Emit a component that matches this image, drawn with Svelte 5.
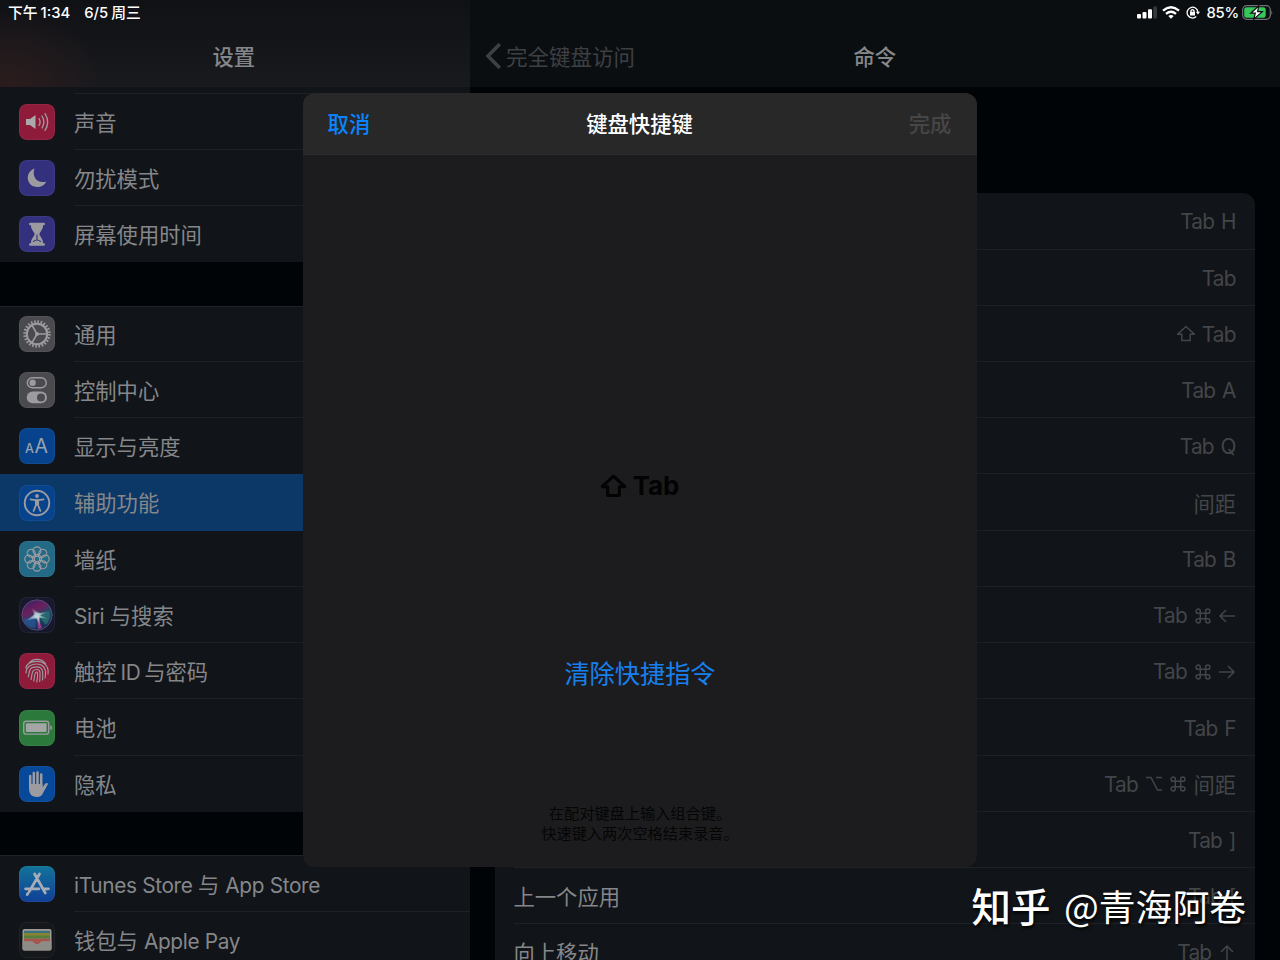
<script>
    const groups = [
        [
            { icon: 'sound', color: '#8f1b3b', label: '声音' },
            { icon: 'moon', color: '#33307d', label: '勿扰模式' },
            { icon: 'hourglass', color: '#33307d', label: '屏幕使用时间' }
        ],
        [
            { icon: 'gear', color: '#4b4b4f', label: '通用' },
            { icon: 'control', color: '#4b4b4f', label: '控制中心' },
            { icon: 'display', color: '#06438c', label: '显示与亮度' },
            { icon: 'access', color: '#06438c', label: '辅助功能', active: true },
            { icon: 'wallpaper', color: '#236a86', label: '墙纸' },
            { icon: 'siri', color: '#17182c', label: 'Siri 与搜索' },
            { icon: 'touch', color: '#8f1b3b', label: '触控\u2009ID\u2009与密码' },
            { icon: 'battery', color: '#2b7a3c', label: '电池' },
            { icon: 'hand', color: '#06489a', label: '隐私' }
        ],
        [
            { icon: 'appstore', color: 'linear-gradient(#12749a, #103f96)', label: 'iTunes Store 与 App Store' },
            { icon: 'wallet', color: '#15171a', label: '钱包与 Apple Pay' }
        ]
    ]

    const commands = [
        { keys: ['Tab', 'H'] },
        { keys: ['Tab'] },
        { keys: ['shift', 'Tab'] },
        { keys: ['Tab', 'A'] },
        { keys: ['Tab', 'Q'] },
        { keys: ['间距'] },
        { keys: ['Tab', 'B'] },
        { keys: ['Tab', 'cmd', 'left'] },
        { keys: ['Tab', 'cmd', 'right'] },
        { keys: ['Tab', 'F'] },
        { keys: ['Tab', 'option', 'cmd', '间距'] },
        { keys: ['Tab', ']'] },
        { label: '上一个应用', keys: ['Tab', '['] },
        { label: '向上移动', keys: ['Tab', 'up'] }
    ]

    const glyphs = {
        shift: 'M9 1.5 L17.3 9.2 H13.2 V15.5 H4.8 V9.2 H.7 Z',
        cmd: 'M6.3 6.3 H11.7 V11.7 H6.3 Z M6.3 6.3 H4.2 A2.1 2.1 0 1 1 6.3 4.2 Z M11.7 6.3 V4.2 A2.1 2.1 0 1 1 13.8 6.3 Z M11.7 11.7 H13.8 A2.1 2.1 0 1 1 11.7 13.8 Z M6.3 11.7 V13.8 A2.1 2.1 0 1 1 4.2 11.7 Z',
        option: 'M1 2.5 H6 L12.5 15 H17 M11 2.5 H17',
        left: 'M17 9 H2 M8 3 L2 9 L8 15',
        right: 'M1 9 H16 M10 3 L16 9 L10 15',
        up: 'M9 17 V2 M3 8 L9 2 L15 8'
    }

    const range = (n) => Array.from({ length: n }, (_, i) => i)
    const isLatin = (text) => /[A-Za-z[\]]/.test(text)
    // latin runs get tighter tracking than the chinese ones
    const split = (text) => text.split(/([A-Za-z][A-Za-z ]*)/).filter(Boolean)
</script>

<main class="screen">
    <aside class="sidebar">
        <header class="bar side-bar"><h1>设置</h1></header>
        <div class="side-list">
            {#each groups as group}
                <ul class="group">
                    {#each group as item}
                        <li class="row" class:active={item.active}>
                            <span class="tile" style="background: {item.color}">
                                <svg viewBox="0 0 36 36" fill="none" stroke="#9b9ba0" stroke-width="1.4" stroke-linecap="round" stroke-linejoin="round">
                                    {#if item.icon === 'sound'}
                                        <path d="M7 15 H11 L16.5 11 V25 L11 21 H7 Z" fill="#aaa" stroke="none" />
                                        <path d="M20 14.5 Q22.2 18 20 21.5 M23 12 Q26.7 18 23 24 M26 9.5 Q31.3 18 26 26.5" />
                                    {:else if item.icon === 'moon'}
                                        <path d="M15.5 8.5 C5 12.5 7.5 27 18.5 27 C23 27 26 24.5 27.2 21.5 C18.5 24 12.5 17 15.5 8.5 Z" fill="#9b9ba0" stroke="none" />
                                    {:else if item.icon === 'hourglass'}
                                        <path d="M11.3 8 H24.7 M11.3 28.5 H24.7" stroke-width="2.6" />
                                        <path d="M12.5 8 H23.5 C24 14 19.7 15.5 19.7 18 C19.7 21 24 22 23.5 28 H12.5 C12 22 16.3 21 16.3 18 C16.3 15.5 12 14 12.5 8 Z" fill="#9b9ba0" />
                                        <path d="M18 19 V24 M14.5 25.5 Q18 22.5 21.5 25.5" stroke="#33307d" stroke-width="1.1" />
                                    {:else if item.icon === 'gear'}
                                        <circle cx="18" cy="18" r="10.2" stroke-width="2" />
                                        <circle cx="18" cy="18" r="12.3" stroke-width="2.8" stroke-dasharray="1.6 1.62" stroke-linecap="butt" />
                                        <circle cx="18" cy="18" r="1.3" fill="#9b9ba0" />
                                        <path d="M19 18 H28 M17.5 17 L13 9.3 M17.5 19 L13 26.7" stroke-width="1.6" />
                                    {:else if item.icon === 'control'}
                                        <rect x="8.3" y="5.7" width="19" height="10" rx="5" />
                                        <circle cx="13.6" cy="10.7" r="3.2" fill="#9b9ba0" stroke="none" />
                                        <rect x="7.7" y="19.5" width="20.3" height="11.8" rx="5.9" fill="#9b9ba0" stroke="none" />
                                        <circle cx="22" cy="25.4" r="4" fill="#4b4b4f" stroke="none" />
                                    {:else if item.icon === 'display'}
                                        <text x="6" y="24.5" font-size="12.5" font-weight="500" fill="#9aa4b0" stroke="none">A</text>
                                        <text x="15.6" y="24.5" font-size="19.5" fill="#9aa4b0" stroke="none">A</text>
                                    {:else if item.icon === 'access'}
                                        <circle cx="18" cy="18" r="12.3" stroke-width="1.9" />
                                        <circle cx="18" cy="11" r="1.9" fill="#9b9ba0" stroke="none" />
                                        <path d="M11.5 14.4 Q18 16 24.5 14.4 M18 15 L17 20 L14.6 26 M18 15 L19 20 L21.4 26" stroke-width="1.8" />
                                        <path d="M16 15 H20 V20.5 H16 Z" fill="#9b9ba0" stroke="none" />
                                    {:else if item.icon === 'wallpaper'}
                                        <circle cx="18" cy="18" r="2.8" stroke-width="1.2" />
                                        {#each range(8) as i}
                                            <circle cx="18" cy="9.7" r="3.9" stroke-width="1.2" transform="rotate({i * 45} 18 18)" />
                                            <path d="M18 15 V12" stroke-width="1.1" transform="rotate({i * 45 + 22.5} 18 18)" />
                                        {/each}
                                    {:else if item.icon === 'siri'}
                                        <defs>
                                            <linearGradient id="orb" x1=".2" y1="0" x2=".7" y2="1">
                                                <stop offset="0" stop-color="#3b2065" />
                                                <stop offset=".35" stop-color="#6c1f5c" />
                                                <stop offset=".6" stop-color="#1d4a66" />
                                                <stop offset="1" stop-color="#202555" />
                                            </linearGradient>
                                            <radialGradient id="flare">
                                                <stop offset="0" stop-color="#c4d4dd" />
                                                <stop offset="1" stop-color="#c4d4dd" stop-opacity="0" />
                                            </radialGradient>
                                        </defs>
                                        <circle cx="18" cy="18" r="15.2" fill="url(#orb)" stroke="#58577b" stroke-width=".8" />
                                        <path d="M18 17 L30 14 Q33 21 27 28 Z" fill="#28706f" stroke="none" opacity=".8" />
                                        <path d="M17 18 L4 23 Q8 30 16 31 Z" fill="#285393" stroke="none" opacity=".8" />
                                        <path d="M18 18 L19 32 L23 31 Z" fill="#8c3b86" stroke="none" />
                                        <path d="M12 10 L19 16 L29 15 L21 18.5 L30 22 L20.5 20.5 L21 30 L17.5 21 L6 24 L15.5 17.5 Z" fill="url(#flare)" stroke="none" />
                                        <circle cx="18" cy="18.5" r="4.5" fill="url(#flare)" stroke="none" />
                                    {:else if item.icon === 'touch'}
                                        <g stroke-width="1.15">
                                            <path d="M9.5 10.5 C14 5 22 5 26.5 10.5 M6.8 15 C8 10 13 8.3 18 8.3 C25 8.3 30 13 29 21 M7 20 C7 14 12 11 18 11 C24 11 27 15 26.5 22 L26 25 M9.3 24 C10.5 18 10 13.8 18 13.8 C23.5 13.8 24.3 18 23.5 27 M12 26.5 C13.5 20 12.5 16.5 18 16.5 C21.8 16.5 21.2 20 20.7 28.5 M14.8 28 C16 23 15 19 18 19 C19.5 20 18.3 25 17.8 29" />
                                        </g>
                                    {:else if item.icon === 'battery'}
                                        <rect x="4.7" y="11.3" width="25" height="12.8" rx="2.4" />
                                        <rect x="6.8" y="13.3" width="20.8" height="8.8" rx="1" fill="#a5a5a5" stroke="none" />
                                        <path d="M32 16.5 V19" stroke-width="1.6" />
                                    {:else if item.icon === 'hand'}
                                        <path d="M11.2 10 V21 M14.8 7 V20 M18.5 6.5 V20 M22.2 8.5 V21" stroke-width="2.5" />
                                        <path d="M10 18 H23.4 V21.5 L26.3 17.5 Q28.5 16.2 29 18 L24.3 26.5 Q22.5 31 18 31 C12 31 10 27 10 22 Z" fill="#9b9ba0" stroke="none" />
                                    {:else if item.icon === 'appstore'}
                                        <path d="M20.5 8 L10.3 25.5 M15.6 8 L26.3 27 M6.5 22.8 H20 M24.5 22.8 H29.5 M9 27.3 L8.2 28.6" stroke="#a6adb8" stroke-width="2.7" />
                                    {:else}
                                        <rect x="3.5" y="7" width="29" height="21.5" rx="2" fill="#9d9b94" stroke="none" />
                                        <rect x="5" y="8.8" width="26" height="3" fill="#3a7180" stroke="none" />
                                        <rect x="5" y="11" width="26" height="3.4" fill="#858334" stroke="none" />
                                        <rect x="5" y="13.6" width="26" height="3" fill="#558039" stroke="none" />
                                        <path d="M5 16.6 H31 V19.5 H22.5 Q18 25 13.5 19.5 H5 Z" fill="#a2564d" stroke="none" />
                                        <path d="M3.5 19.4 H12.5 Q18 25.8 23.5 19.4 H32.5 V27 Q32 28.5 31 28.5 H5 Q4 28.5 3.5 27 Z" fill="#8d8c87" stroke="none" />
                                    {/if}
                                </svg>
                            </span>
                            <span class="label">{#each split(item.label) as part}<span class:latin={isLatin(part)}>{part}</span>{/each}</span>
                        </li>
                    {/each}
                </ul>
            {/each}
        </div>
    </aside>

    <section class="detail">
        <header class="bar detail-bar">
            <div class="back">
                <svg width="17" height="28" viewBox="0 0 17 28" fill="none" stroke="currentColor" stroke-width="3.6"><path d="M14.8 2 L3 14 L14.8 26" /></svg>
                <span>完全键盘访问</span>
            </div>
            <h1>命令</h1>
        </header>
        <ul class="commands">
            {#each commands as command}
                <li class="command">
                    <span class="name">{command.label ?? ''}</span>
                    <span class="keys">
                        {#each command.keys as key}
                            {#if glyphs[key]}
                                <svg class="glyph" viewBox="0 0 18 18"><path d={glyphs[key]} /></svg>
                            {:else}
                                <span class:latin={isLatin(key)}>{key}</span>
                            {/if}
                        {/each}
                    </span>
                </li>
            {/each}
        </ul>
    </section>

    <div class="status">
        <span class="time">下午<i></i>1:34</span>
        <span class="date">6/5<i></i>周三</span>
        <div class="signals">
            <svg width="20" height="13" viewBox="0 0 20 13" fill="#fff">
                <rect x="0" y="8" width="4" height="4.5" rx="1" />
                <rect x="5.5" y="6" width="4" height="6.5" rx="1" />
                <rect x="11" y="3.2" width="4" height="9.3" rx="1" />
                <rect x="16.3" y=".5" width="3.7" height="12" rx="1" fill="#36383b" />
            </svg>
            <svg class="wifi" width="18" height="13" viewBox="0 0 18 13" fill="none" stroke="#fff" stroke-width="2.4">
                <path d="M1 4.6 Q9 -2 17 4.6 M4 7.9 Q9 3.8 14 7.9" />
                <path d="M6.3 10 Q9 7.9 11.7 10 L9 12.7 Z" fill="#fff" stroke="none" />
            </svg>
            <svg class="lock" width="14" height="13" viewBox="0 0 14 13" fill="none" stroke="#fff" stroke-width="1.3">
                <path d="M10.2 10.6 A5.4 5.4 0 1 1 11.9 5.9" />
                <path d="M9.8 5.7 H14 L12 8.5 Z M4 5.8 H9 V9.5 H4 Z" fill="#fff" stroke="none" />
                <path d="M5 6 V4.8 Q6.5 2.6 8 4.8 V6" />
            </svg>
            <span class="percent">85%</span>
            <svg width="31" height="15" viewBox="0 0 31 15" fill="none">
                <rect x=".7" y=".7" width="27.6" height="13.6" rx="4" stroke="#707275" stroke-width="1.2" />
                <rect x="2.2" y="2.2" width="21.5" height="10.6" rx="2.5" fill="#35c759" />
                <path d="M29.4 5 Q31 7.5 29.4 10 Z" fill="#707275" />
                <path d="M16.8 .8 L8.8 8.2 H13.3 L11.8 14.2 L20.3 6.7 H15.6 Z" fill="#fff" stroke="#0b0d10" stroke-width="1.2" />
            </svg>
        </div>
    </div>

    <div class="modal">
        <header class="modal-bar">
            <span class="cancel">取消</span>
            <h2>键盘快捷键</h2>
            <span class="done">完成</span>
        </header>
        <div class="modal-body">
            <div class="shortcut">
                <svg width="25" height="25" viewBox="0 0 18 18"><path d={glyphs.shift} /></svg>
                <span>Tab</span>
            </div>
            <div class="clear">清除快捷指令</div>
            <p class="hint">在配对键盘上输入组合键。<br />快速键入两次空格结束录音。</p>
        </div>
    </div>

    <div class="watermark"><span class="brand">知乎</span><span>@青海阿卷</span></div>
</main>

<style>
    :global(body) {
        margin: 0;
        background: #010406;
    }

    .screen {
        position: relative;
        display: grid;
        grid-template-columns: 469.5px 1fr;
        width: 1280px;
        height: 960px;
        overflow: hidden;
        background: #010406;
        color: #85878a;
        font-family: Inter, "Noto Sans CJK SC", sans-serif;
        font-size: 21.3px;
        font-weight: 400;
        white-space: nowrap;
    }

    h1, h2, ul, p {
        margin: 0;
        padding: 0;
        list-style: none;
    }

    h1, h2 {
        font-size: 21.3px;
        font-weight: 500;
    }

    .latin {
        font-size: 20.8px;
        letter-spacing: -0.33px;
        white-space: pre;
    }

    .sidebar, .detail {
        min-width: 0;
        height: 960px;
        overflow: hidden;
    }

    .bar {
        box-sizing: border-box;
        height: 87px;
        padding-top: 24px;
        display: grid;
        align-items: center;
    }

    .side-bar {
        justify-content: center;
        padding-right: 2px;
        background: radial-gradient(ellipse 95px 80px at 10px 88px, #2b1c1d, transparent), linear-gradient(#101115, #191a1e);
    }

    .side-list {
        display: flex;
        flex-direction: column;
        gap: 43.3px;
        padding-top: 6.7px;
        background: linear-gradient(#111418 10px, transparent 10px);
    }

    .group {
        background: #111418;
    }

    .row {
        display: flex;
        align-items: center;
        box-sizing: border-box;
        height: 56.25px;
        padding-left: 19px;
    }

    .tile {
        width: 36px;
        height: 36px;
        margin-right: 19px;
        border-radius: 8px;
        box-shadow: inset 0 0 0 1px rgba(255, 255, 255, 0.05);
    }

    .tile svg {
        display: block;
    }

    .label {
        flex: 1;
        padding-top: 2px;
        line-height: 55.25px;
        border-top: 1px solid #1d2024;
    }

    .group + .group .row:first-child {
        border-top: 1px solid #202327;
    }

    .group + .group .row:first-child .label {
        border-color: transparent;
    }

    .row.active {
        background: #0c3867;
    }

    .active .label, .active + .row .label {
        border-color: transparent;
    }

    .detail-bar {
        grid-template-columns: 1fr auto 1fr;
        background: #0b0e11;
    }

    .back {
        display: flex;
        align-items: center;
        gap: 4px;
        padding-left: 15.5px;
        color: #3d4043;
        font-size: 21.5px;
    }

    .commands {
        margin: 106.3px 25px 0 25.5px;
        border-radius: 12px 12px 0 0;
        background: #111418;
    }

    .command {
        display: flex;
        justify-content: space-between;
        align-items: center;
        box-sizing: border-box;
        height: 56.24px;
        margin-left: 19px;
        padding-right: 19px;
        border-bottom: 1px solid #1d2024;
    }

    .name {
        margin-left: -0.5px;
    }

    .keys {
        display: flex;
        align-items: center;
        gap: 6.4px;
        color: #434548;
    }

    .keys .latin {
        padding-top: 2px;
        letter-spacing: -0.8px;
        margin-right: 0.4px;
    }

    .glyph {
        width: 18px;
        height: 18px;
        margin-top: 2px;
        fill: none;
        stroke: currentColor;
        stroke-width: 1.5;
    }

    .status {
        position: absolute;
        inset: 0 0 auto 0;
        display: flex;
        align-items: center;
        height: 25px;
        padding: 0 7px 0 8px;
        color: #fff;
        font-size: 14.8px;
        font-weight: 500;
    }

    .status span {
        margin-top: -2px;
    }

    .status i {
        display: inline-block;
        width: 3px;
    }

    .status .date {
        margin-left: 14px;
    }

    .signals {
        display: flex;
        align-items: center;
        margin-left: auto;
    }

    .wifi {
        margin-left: 5px;
    }

    .lock {
        margin-left: 6px;
    }

    .status .percent {
        margin: 0 3px 0 6px;
        letter-spacing: -0.2px;
    }

    .modal {
        position: absolute;
        left: 302.6px;
        top: 93px;
        display: flex;
        flex-direction: column;
        width: 674.8px;
        height: 774px;
        overflow: hidden;
        border-radius: 12px;
        background: #1c1c1e;
    }

    .modal-bar {
        display: grid;
        grid-template-columns: 1fr auto 1fr;
        align-items: center;
        box-sizing: border-box;
        height: 62px;
        padding: 0 26px 2px 25px;
        border-bottom: 1px solid #2c2c2d;
        background: #282828;
    }

    h2 {
        color: #fff;
    }

    .cancel {
        color: #0a84ff;
        font-weight: 500;
    }

    .done {
        justify-self: end;
        color: #464647;
        font-weight: 500;
    }

    .modal-body {
        display: flex;
        flex: 1;
        flex-direction: column;
        align-items: center;
    }

    .shortcut {
        display: flex;
        align-items: center;
        gap: 7px;
        height: 40px;
        margin-top: 310px;
        color: #030303;
        font-size: 26px;
        font-weight: 700;
        letter-spacing: -0.2px;
    }

    .shortcut svg {
        margin-top: 3px;
        fill: none;
        stroke: currentColor;
        stroke-width: 2.2;
        stroke-linejoin: round;
    }

    .clear {
        height: 40px;
        margin-top: 149px;
        color: #1780ee;
        font-size: 25.2px;
        line-height: 40px;
    }

    .hint {
        margin-top: 110px;
        color: #050505;
        font-size: 15.2px;
        line-height: 20px;
        text-align: center;
    }

    .watermark {
        position: absolute;
        right: 34px;
        bottom: 27px;
        display: flex;
        gap: 13.5px;
        color: #fff;
        font-size: 36.8px;
        line-height: 56px;
        text-shadow: 1px 2px 3px #000;
    }

    .watermark span {
        font-family: "Noto Sans CJK SC", sans-serif;
    }

    .watermark .brand {
        font-size: 39.5px;
        font-weight: 500;
    }
</style>
